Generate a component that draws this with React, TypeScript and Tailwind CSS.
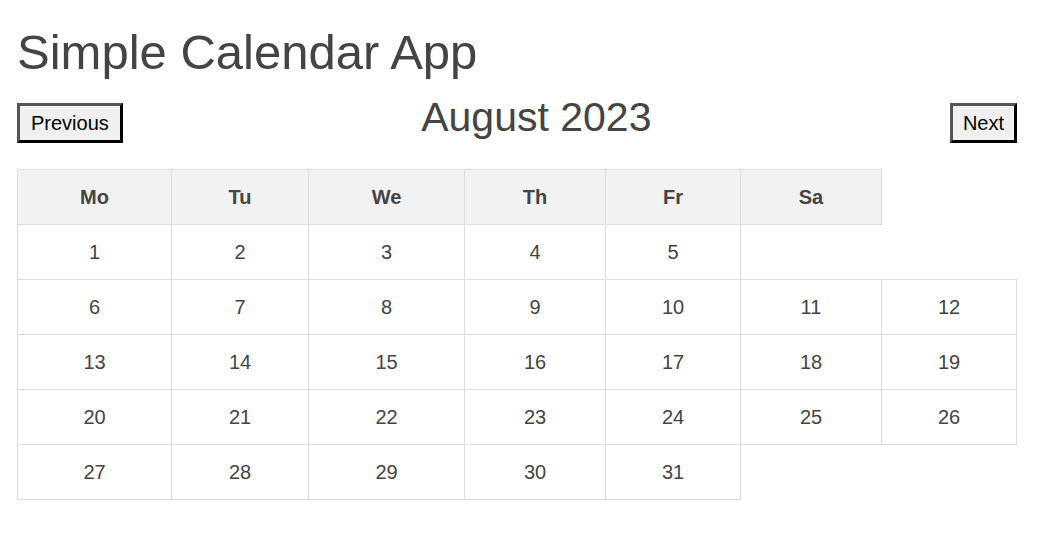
import React from "react";

const days = ["Mo", "Tu", "We", "Th", "Fr", "Sa"];

const weeks: number[][] = [
  [1, 2, 3, 4, 5],
  [6, 7, 8, 9, 10, 11, 12],
  [13, 14, 15, 16, 17, 18, 19],
  [20, 21, 22, 23, 24, 25, 26],
  [27, 28, 29, 30, 31],
];

const colWidths = ["w-[154px]", "w-[137px]", "w-[156px]", "w-[141px]", "w-[135px]", "w-[141px]", "w-[135px]"];

function NavButton({ label, pad }: { label: string; pad: string }) {
  return (
    <button className={`mt-[11px] bg-[#f0f0f0] border-[3px] border-t-[#555] border-l-[#555] border-r-black border-b-black py-[5px] text-[20px] leading-[24px] text-black ${pad}`}>
      {label}
    </button>
  );
}

export default function App() {
  return (
    <div className="min-h-screen bg-white px-[17px] pt-[25px] text-[#444] font-['Liberation_Sans',Arial,sans-serif]">
      <h1 className="text-[49px] leading-[54px] font-normal">Simple Calendar App</h1>

      {/* month navigation */}
      <div className="mt-[13px] flex items-start justify-between w-[1000px]">
        <NavButton label="Previous" pad="px-[11px]" />
        <h2 className="mt-[3px] text-[41px] leading-[44px] font-normal">August 2023</h2>
        <NavButton label="Next" pad="px-[10px]" />
      </div>

      {/* calendar grid */}
      <table className="mt-[26px] table-fixed border-collapse w-[1000px] text-[20px]">
        <colgroup>
          {colWidths.map((w, i) => (
            <col key={i} className={w} />
          ))}
        </colgroup>
        <thead>
          <tr>
            {days.map((d) => (
              <th key={d} className="border border-[#ddd] bg-[#f2f2f2] py-4 leading-[22px] font-bold text-center">
                {d}
              </th>
            ))}
          </tr>
        </thead>
        <tbody>
          {weeks.map((week, i) => (
            <tr key={i}>
              {week.map((n) => (
                <td key={n} className="border border-[#ddd] py-4 leading-[22px] text-center">
                  {n}
                </td>
              ))}
            </tr>
          ))}
        </tbody>
      </table>
    </div>
  );
}
